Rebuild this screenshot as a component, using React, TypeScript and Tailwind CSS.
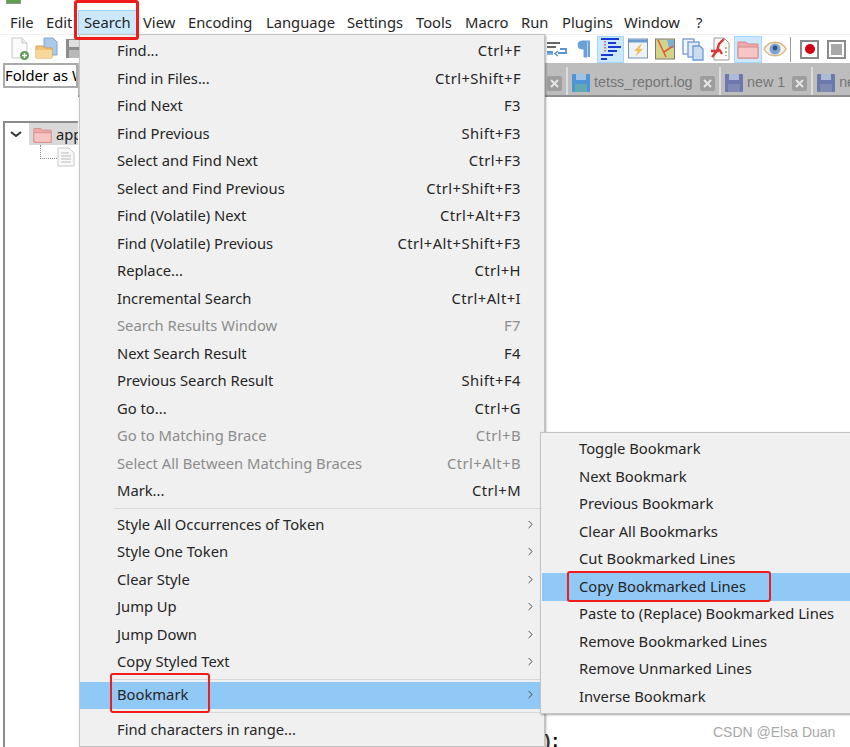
import { ChevronRight } from 'lucide-react'

const FONT = "font-['Noto_Sans',sans-serif]"

const menuBar = [
  { label: 'File', cls: 'w-[36px]' },
  { label: 'Edit', cls: 'w-[38px]' },
  { label: 'Search', cls: 'w-[59px]', active: true },
  { label: 'View', cls: 'w-[45px]' },
  { label: 'Encoding', cls: 'w-[78px]' },
  { label: 'Language', cls: 'w-[81px]' },
  { label: 'Settings', cls: 'w-[69px]' },
  { label: 'Tools', cls: 'w-[49px]' },
  { label: 'Macro', cls: 'w-[56px]' },
  { label: 'Run', cls: 'w-[41px]' },
  { label: 'Plugins', cls: 'w-[62px]' },
  { label: 'Window', cls: 'w-[72px]' },
  { label: '?', cls: 'w-[20px]' },
]

type Item = { label: string; shortcut?: string; disabled?: boolean }

const searchItems: Item[] = [
  { label: 'Find...', shortcut: 'Ctrl+F' },
  { label: 'Find in Files...', shortcut: 'Ctrl+Shift+F' },
  { label: 'Find Next', shortcut: 'F3' },
  { label: 'Find Previous', shortcut: 'Shift+F3' },
  { label: 'Select and Find Next', shortcut: 'Ctrl+F3' },
  { label: 'Select and Find Previous', shortcut: 'Ctrl+Shift+F3' },
  { label: 'Find (Volatile) Next', shortcut: 'Ctrl+Alt+F3' },
  { label: 'Find (Volatile) Previous', shortcut: 'Ctrl+Alt+Shift+F3' },
  { label: 'Replace...', shortcut: 'Ctrl+H' },
  { label: 'Incremental Search', shortcut: 'Ctrl+Alt+I' },
  { label: 'Search Results Window', shortcut: 'F7', disabled: true },
  { label: 'Next Search Result', shortcut: 'F4' },
  { label: 'Previous Search Result', shortcut: 'Shift+F4' },
  { label: 'Go to...', shortcut: 'Ctrl+G' },
  { label: 'Go to Matching Brace', shortcut: 'Ctrl+B', disabled: true },
  { label: 'Select All Between Matching Braces', shortcut: 'Ctrl+Alt+B', disabled: true },
  { label: 'Mark...', shortcut: 'Ctrl+M' },
]

const styleItems = [
  'Style All Occurrences of Token',
  'Style One Token',
  'Clear Style',
  'Jump Up',
  'Jump Down',
  'Copy Styled Text',
]

const bookmarkItems = [
  'Toggle Bookmark',
  'Next Bookmark',
  'Previous Bookmark',
  'Clear All Bookmarks',
  'Cut Bookmarked Lines',
  'Copy Bookmarked Lines',
  'Paste to (Replace) Bookmarked Lines',
  'Remove Bookmarked Lines',
  'Remove Unmarked Lines',
  'Inverse Bookmark',
]

function MenuRow({ item, arrow, active }: { item: Item; arrow?: boolean; active?: boolean }) {
  return (
    <div
      className={`flex h-[27.5px] items-center pb-[2px] pl-[37px] pr-[23px] ${active ? 'bg-[#90c8f6]' : ''} ${
        item.disabled ? 'text-[#8c8c8c]' : 'text-[#262626]'
      }`}
    >
      <span className="flex-1 whitespace-nowrap">{item.label}</span>
      {item.shortcut && <span className="whitespace-nowrap tracking-[0.45px]">{item.shortcut}</span>}
      {arrow && <ChevronRight className="mr-[-16px] h-[13px] w-[13px] text-[#333]" strokeWidth={1.6} />}
    </div>
  )
}

function Separator({ cls }: { cls: string }) {
  return (
    <div className={`flex items-center pl-[34px] ${cls}`}>
      <div className="h-px w-full bg-[#d7d7d7]" />
    </div>
  )
}

function ToolBtn({ children, selected }: { children: React.ReactNode; selected?: boolean }) {
  return (
    <div
      className={`flex h-[27px] w-[27.5px] shrink-0 items-center justify-center border ${
        selected ? 'border-[#a6d6fb] bg-[#cce8ff]' : 'border-transparent'
      }`}
    >
      {children}
    </div>
  )
}

function NewFileIcon() {
  return (
    <svg width="22" height="24" viewBox="0 0 22 24">
      <path d="M3 1h10l5 5v15H3z" fill="#fbfbfb" stroke="#c9c9c9" />
      <path d="M13 1v5h5" fill="#eee" stroke="#c9c9c9" />
      <circle cx="15.5" cy="18.5" r="4.5" fill="#5f9c55" />
      <path d="M13 18.5h5M15.5 16v5" stroke="#fff" strokeWidth="1.4" />
    </svg>
  )
}

function OpenIcon() {
  return (
    <svg width="24" height="24" viewBox="0 0 24 24">
      <path d="M9 1h9l4 4v13H9z" fill="#a9c8ea" stroke="#7fa6d2" />
      <path d="M1 9h7l2 2h7v10H1z" fill="#f2c276" stroke="#d59f4e" />
      <path d="M1 13h16v8H1z" fill="#f8d898" />
    </svg>
  )
}

function SaveIcon() {
  return (
    <svg width="20" height="22" viewBox="0 0 20 22">
      <rect x="1" y="1" width="18" height="19" fill="#8d8d8d" />
      <rect x="4" y="2" width="12" height="7" fill="#dfdfdf" />
      <rect x="4" y="12" width="12" height="8" fill="#b9b9b9" />
    </svg>
  )
}

function WrapIcon() {
  return (
    <svg width="24" height="22" viewBox="0 0 24 22">
      <path d="M1 5h13M1 9h9" stroke="#333" strokeWidth="1.3" />
      <path d="M1 14h6M12 15h8v-4h-6" fill="none" stroke="#5b93cf" strokeWidth="1.8" />
      <path d="M1 16h6M12 13l-3 2.5 3 2.5" fill="none" stroke="#5b93cf" strokeWidth="1.6" />
    </svg>
  )
}

function PilcrowIcon() {
  return (
    <svg width="14" height="20" viewBox="0 0 14 20">
      <path d="M13 2H5a4 4 0 0 0 0 8h2v8h3V2" fill="#6aa2d8" stroke="#6aa2d8" />
      <path d="M11 2h2v16h-2z" fill="#6aa2d8" />
    </svg>
  )
}

function IndentIcon() {
  return (
    <svg width="21" height="24" viewBox="0 0 21 24">
      <path d="M1 1h18v2H1zM8 5h8v2H8zM8 9h13v2H8zM8 13h9v2H8zM1 17h12v2H1zM1 21h6v2H1z" fill="#1a37d8" />
      <path d="M5 4v12" stroke="#d24a4a" strokeWidth="1.5" strokeDasharray="1.5 1.5" />
    </svg>
  )
}

function FunctionIcon() {
  return (
    <svg width="20" height="22" viewBox="0 0 20 22">
      <rect x="0.5" y="1" width="19" height="19" fill="#eef3f8" stroke="#6f93bd" />
      <rect x="1" y="1.5" width="18" height="3" fill="#6d9bd0" />
      <path d="M13 6l-7 7h4l-3 6 8-8h-4l3-5z" fill="#f1bd4e" />
    </svg>
  )
}

function MapIcon() {
  return (
    <svg width="20" height="22" viewBox="0 0 20 22">
      <rect x="0.5" y="1" width="19" height="20" fill="#d4d488" stroke="#7a7a7a" />
      <path d="M12 2h7v8h-5z" fill="#7fb0d8" />
      <path d="M3 2l8 17M18 8l-9 6" stroke="#d8603a" strokeWidth="1.6" />
    </svg>
  )
}

function DocsIcon() {
  return (
    <svg width="22" height="24" viewBox="0 0 22 24">
      <rect x="1" y="2" width="11" height="15" fill="#f4f8fc" stroke="#6f9bd0" strokeWidth="1.3" />
      <rect x="6" y="5" width="11" height="15" fill="#dfeaf6" stroke="#6f9bd0" strokeWidth="1.3" />
      <path d="M11 9h7l3 3v11H11z" fill="#c9dcf2" stroke="#6f9bd0" strokeWidth="1.3" />
    </svg>
  )
}

function RedDocIcon() {
  return (
    <svg width="22" height="24" viewBox="0 0 22 24">
      <path d="M5 1h10l5 5v17H5z" fill="#fcfbf6" stroke="#9a9a9a" />
      <path d="M3 20l5-6 2-7 5-5M2 14h8M10 12l3 5" fill="none" stroke="#d8363a" strokeWidth="2.4" />
      <path d="M17 10v9" stroke="#7ba86d" strokeWidth="1.4" strokeDasharray="2 2" />
    </svg>
  )
}

function PinkFolderIcon({ size = 22 }: { size?: number }) {
  return (
    <svg width={size} height={size} viewBox="0 0 22 22" className="shrink-0">
      <path d="M1 4h8l2 2h10v14H1z" fill="#efa9a9" stroke="#d78a8a" />
      <path d="M1 9h20v11H1z" fill="#f6c6c4" stroke="#d78a8a" />
    </svg>
  )
}

function EyeIcon() {
  return (
    <svg width="24" height="20" viewBox="0 0 24 20">
      <path d="M1 10c5-9 17-9 22 0-5 9-17 9-22 0z" fill="#f5f1e4" stroke="#d8b783" strokeWidth="1.5" />
      <circle cx="12" cy="10" r="5.5" fill="#7da5d3" />
      <circle cx="12" cy="9" r="2.4" fill="#33527f" />
    </svg>
  )
}

function RecordIcon({ stop }: { stop?: boolean }) {
  return (
    <div className="flex h-[19px] w-[19px] items-center justify-center border-2 border-[#8a8a8a] bg-white">
      {stop ? <div className="h-[11px] w-[11px] bg-[#a8a8a8]" /> : <div className="h-[10px] w-[10px] rounded-full bg-[#d00012]" />}
    </div>
  )
}

function TabFile({ muted }: { muted?: boolean }) {
  return (
    <svg width="18" height="18" viewBox="0 0 18 18" className="shrink-0">
      <rect width="18" height="18" rx="1" fill={muted ? '#6c78ac' : '#4f94d8'} />
      <rect x="4" y="0" width="10" height="6" fill="#c5d6ea" opacity="0.7" />
      <rect x="3" y="10" width="12" height="8" fill={muted ? '#8088b4' : '#62aab0'} />
    </svg>
  )
}

function TabClose() {
  return (
    <div className="flex h-[15px] w-[15px] shrink-0 items-center justify-center rounded-[2px] bg-[#9d9d9d]">
      <svg width="9" height="9" viewBox="0 0 9 9">
        <path d="M1 1l7 7M8 1L1 8" stroke="#e6e6e6" strokeWidth="2" />
      </svg>
    </div>
  )
}

function TabDivider() {
  return <div className="mt-[-4px] h-[28px] w-[2px] shrink-0 bg-[#dcdcdc]" />
}

export default function App() {
  return (
    <div className={`relative h-[747px] w-[850px] overflow-hidden bg-white text-[14.75px] ${FONT}`}>
      {/* title bar, mostly cropped */}
      <div className="h-[10px] pl-[6px]">
        <div className="h-[4px] w-[15px] border-x border-b border-[#8a9a8a] bg-[#5fa04f]" />
      </div>

      {/* menu bar */}
      <div className="flex h-[24px] items-center pl-[4px] text-[#262626]">
        {menuBar.map(m => (
          <div
            key={m.label}
            className={`flex h-[25px] shrink-0 items-center border pl-[5px] ${m.cls} ${
              m.active ? 'border-[#99d1ff] bg-[#cce8ff]' : 'border-transparent'
            }`}
          >
            {m.label}
          </div>
        ))}
      </div>

      {/* toolbar */}
      <div className="flex h-[29px] items-center border-t border-[#f0f0f0] pl-[6px]">
        <ToolBtn><NewFileIcon /></ToolBtn>
        <ToolBtn><OpenIcon /></ToolBtn>
        <ToolBtn><SaveIcon /></ToolBtn>
        <div className="w-[456px] shrink-0" />
        <ToolBtn><WrapIcon /></ToolBtn>
        <div className="-mx-[1.5px]"><ToolBtn><PilcrowIcon /></ToolBtn></div>
        <ToolBtn selected><IndentIcon /></ToolBtn>
        <ToolBtn><FunctionIcon /></ToolBtn>
        <ToolBtn><MapIcon /></ToolBtn>
        <ToolBtn><DocsIcon /></ToolBtn>
        <ToolBtn><RedDocIcon /></ToolBtn>
        <ToolBtn selected><PinkFolderIcon /></ToolBtn>
        <ToolBtn><EyeIcon /></ToolBtn>
        <div className="mx-[1px] h-[25px] w-px shrink-0 bg-[#999]" />
        <div className="ml-[8px] flex shrink-0 gap-[8px]">
          <RecordIcon />
          <RecordIcon stop />
        </div>
      </div>

      <div className="flex h-[684px]">
        {/* folder as workspace panel */}
        <div className="flex w-[78px] shrink-0 flex-col pl-[3px] text-black">
          <div className="flex h-[25px] items-center overflow-hidden whitespace-nowrap border-2 border-[#aaa] text-[14.75px]">
            Folder as W
          </div>
          <div className="mt-[33px] flex-1 overflow-hidden border-l-2 border-t-2 border-[#8c8c8c]">
            <div className="flex h-[22px] items-center">
              <svg width="24" height="22" viewBox="0 0 24 22" className="shrink-0">
                <path d="M6 9l5 4 5-4" fill="none" stroke="#333" strokeWidth="2" />
              </svg>
              <div className="flex h-[22px] flex-1 items-center gap-[4px] overflow-hidden bg-[#d9d9d9] pl-[4px] text-[#222]">
                <PinkFolderIcon size={19} />
                <span>app</span>
              </div>
            </div>
            <div className="ml-[35px] flex items-center">
              <div className="mb-[10px] h-[14px] w-[17px] border-b border-l border-dotted border-[#888]" />
              <svg width="18" height="20" viewBox="0 0 18 20">
                <path d="M1 1h11l5 5v13H1z" fill="#f8f8f8" stroke="#c8c8c8" />
                <path d="M4 6h8M4 9h10M4 12h10M4 15h10" stroke="#bbb" />
              </svg>
            </div>
          </div>
        </div>

        {/* editor */}
        <div className="relative flex-1 overflow-hidden">
          <div className="flex h-[34px] items-center gap-[4px] border-b-2 border-[#8f8f8f] bg-[#bdbdbd] pl-[469px] pt-[8px] text-[14.3px] text-[#757575]">
            <TabClose />
            <TabDivider />
            <TabFile />
            <span className="w-[98px] shrink-0 whitespace-nowrap font-['Liberation_Sans',sans-serif]">tetss_report.log</span>
            <div className="ml-[4px]"><TabClose /></div>
            <TabDivider />
            <TabFile muted />
            <span className="shrink-0 whitespace-nowrap font-['Liberation_Sans',sans-serif]">new 1</span>
            <div className="ml-[3px]"><TabClose /></div>
            <TabDivider />
            <TabFile muted />
            <span className="shrink-0 font-['Liberation_Sans',sans-serif]">ne</span>
          </div>
          <div className="absolute left-[185px] top-[666px] flex whitespace-nowrap font-['Liberation_Mono',monospace] text-[17.5px] font-bold leading-[26px] text-[#333]">
            <span className="w-[279px]">-- Source Log: data state</span>
            <span className="w-[8px]">)</span>
            <span className="text-black">:</span>
          </div>
        </div>
      </div>

      {/* search dropdown */}
      <div className="absolute left-[79px] top-[34px] w-[466px] border border-[#c4c4c4] bg-[#f0f0f0] py-[2.5px] shadow-[1px_1px_2px_rgba(0,0,0,0.35)]">
        {searchItems.map(item => (
          <MenuRow key={item.label} item={item} />
        ))}
        <Separator cls="h-[6.25px]" />
        {styleItems.map(label => (
          <MenuRow key={label} item={{ label }} arrow />
        ))}
        <Separator cls="h-[5.5px]" />
        <MenuRow item={{ label: 'Bookmark' }} arrow active />
        <Separator cls="h-[7px]" />
        <MenuRow item={{ label: 'Find characters in range...' }} />
      </div>

      {/* bookmark submenu */}
      <div className="absolute left-[540px] top-[432px] w-[320px] border border-[#c4c4c4] bg-[#f0f0f0] py-[2.5px] pl-[1px] shadow-[1px_1px_2px_rgba(0,0,0,0.35)]">
        {bookmarkItems.map(label => (
          <MenuRow key={label} item={{ label }} active={label === 'Copy Bookmarked Lines'} />
        ))}
      </div>

      {/* red annotation boxes */}
      <div className="absolute left-[74px] top-0 h-[40px] w-[65px] rounded-[3px] border-[3px] border-[#f01c1c]" />
      <div className="absolute left-[110px] top-[673px] h-[40px] w-[100px] rounded-[3px] border-2 border-[#f01c1c]" />
      <div className="absolute left-[567px] top-[571px] h-[31px] w-[204px] rounded-[3px] border-2 border-[#f01c1c]" />

      {/* watermark */}
      <div className="absolute left-[713px] top-[722px] whitespace-nowrap font-['Liberation_Sans',sans-serif] text-[14px] text-[#a8a8a8]">
        CSDN @Elsa Duan
      </div>
    </div>
  )
}
